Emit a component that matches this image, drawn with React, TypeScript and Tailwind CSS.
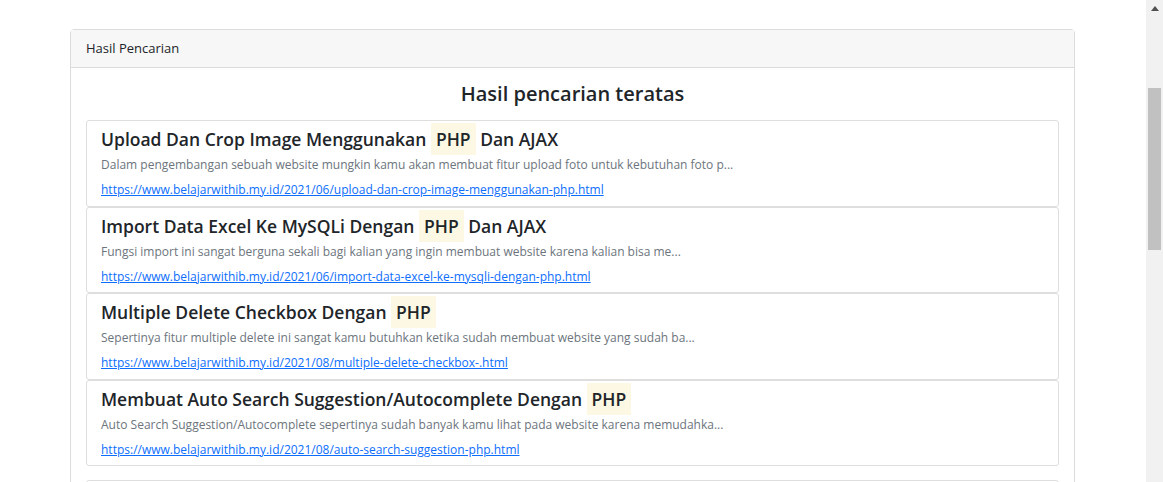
const RESULTS = [
  {
    before: "Upload Dan Crop Image Menggunakan",
    after: "Dan AJAX",
    desc: "Dalam pengembangan sebuah website mungkin kamu akan membuat fitur upload foto untuk kebutuhan foto p...",
    url: "https://www.belajarwithib.my.id/2021/06/upload-dan-crop-image-menggunakan-php.html",
  },
  {
    before: "Import Data Excel Ke MySQLi Dengan",
    after: "Dan AJAX",
    desc: "Fungsi import ini sangat berguna sekali bagi kalian yang ingin membuat website karena kalian bisa me...",
    url: "https://www.belajarwithib.my.id/2021/06/import-data-excel-ke-mysqli-dengan-php.html",
  },
  {
    before: "Multiple Delete Checkbox Dengan",
    after: "",
    desc: "Sepertinya fitur multiple delete ini sangat kamu butuhkan ketika sudah membuat website yang sudah ba...",
    url: "https://www.belajarwithib.my.id/2021/08/multiple-delete-checkbox-.html",
  },
  {
    before: "Membuat Auto Search Suggestion/Autocomplete Dengan",
    after: "",
    desc: "Auto Search Suggestion/Autocomplete sepertinya sudah banyak kamu lihat pada website karena memudahka...",
    url: "https://www.belajarwithib.my.id/2021/08/auto-search-suggestion-php.html",
  },
]

export default function App() {
  return (
    <div className="flex h-[482px] overflow-hidden bg-white font-['Open_Sans',sans-serif] text-[#212529]">
      <div className="flex-1 min-w-0 pt-[29px]">
        <div className="ml-[70px] w-[1005px] rounded-[4px] border border-[#dcdcdc]">
          <div className="h-[38px] flex items-center px-[15px] bg-[#f7f7f7] border-b border-[#dcdcdc] text-[13px] text-[#212529]">
            Hasil Pencarian
          </div>
          <div className="px-[15px] pt-[12px]">
            <h4 className="text-center text-[20px] font-semibold leading-[28px] mb-[12px] text-[#212529]">
              Hasil pencarian teratas
            </h4>
            <div className="flex flex-col">
              {RESULTS.map((r) => (
                <div key={r.url} className="h-[86.5px] rounded-[3px] border border-[#dedede] px-[14px] pt-[5px]">
                  <h5 className="text-[17.5px] font-semibold leading-[26px] text-[#212529]">
                    {r.before}{" "}
                    <mark className="bg-[#fcf8e3] px-[5px] py-[4px] text-[#212529]">PHP</mark>
                    {r.after && <> {r.after}</>}
                  </h5>
                  <p className="mt-[4px] text-[12px] leading-[18px] text-[#6c757d]">{r.desc}</p>
                  <a href="#" className="block mt-[7px] text-[12px] leading-[18px] text-[#0d6efd] underline">
                    {r.url}
                  </a>
                </div>
              ))}
            </div>
            <div className="mt-[14px] h-[80px] rounded-[3px] border border-[#dedede]" />
          </div>
        </div>
      </div>
      <div className="w-[17px] shrink-0 bg-[#f1f1f1] flex flex-col items-center">
        <div className="h-[17px] flex items-center justify-center">
          <svg width="8" height="5" viewBox="0 0 8 5"><path d="M0 5 L4 0 L8 5 Z" fill="#505050" /></svg>
        </div>
        <div className="mt-[71px] w-[13px] h-[162px] bg-[#c1c1c1]" />
      </div>
    </div>
  )
}
